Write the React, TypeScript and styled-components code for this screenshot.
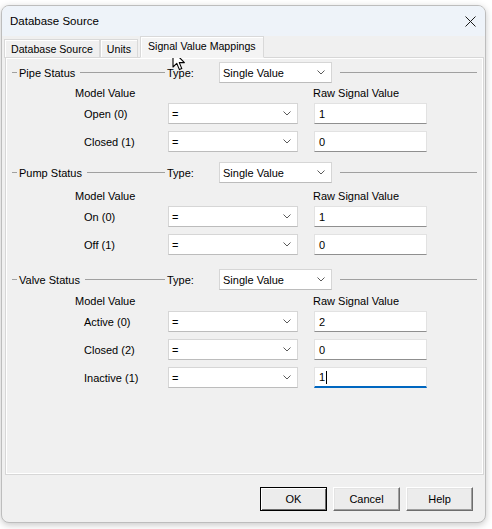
import React from "react";
import styled, { createGlobalStyle } from "styled-components";

const GlobalStyle = createGlobalStyle`
  html, body {
    margin: 0;
    padding: 0;
    background: #ffffff;
  }
  body {
    font-family: "Liberation Sans", Arial, sans-serif;
    font-size: 11px;
    color: #000000;
  }
`;

const Desktop = styled.div`
  position: relative;
  width: 492px;
  height: 529px;
  padding: 5px 0 0 1px;
  box-sizing: border-box;
  overflow: hidden;
`;

const Window = styled.div`
  width: 485px;
  height: 518px;
  box-sizing: border-box;
  border: 1px solid #bdbdbd;
  border-radius: 8px;
  background: #f0f0f0;
  box-shadow: 0 2px 7px rgba(0, 0, 0, 0.22);
  display: flex;
  flex-direction: column;
  overflow: hidden;
`;

const TitleBar = styled.div`
  height: 30px;
  flex: none;
  display: flex;
  align-items: center;
  justify-content: space-between;
  padding: 0 9px 0 8px;
  background: #eef3f9;
`;

const Title = styled.span`
  font-size: 11.5px;
  color: #000;
`;

const CloseIcon = styled.svg`
  width: 11px;
  height: 11px;
  display: block;
`;

const TabStrip = styled.div`
  height: 22px;
  flex: none;
  display: flex;
  align-items: flex-end;
  padding-left: 2px;
  margin-bottom: -1px;
`;

const Tab = styled.div<{ $active?: boolean }>`
  position: relative;
  z-index: ${(p) => (p.$active ? 1 : 0)};
  height: ${(p) => (p.$active ? "22px" : "19px")};
  margin-left: ${(p) => (p.$active ? "2px" : "0")};
  padding: 0 ${(p) => (p.$active ? "7px" : "6px")};
  padding-bottom: ${(p) => (p.$active ? "3px" : "0")};
  box-sizing: border-box;
  display: flex;
  align-items: center;
  font-size: 10.6px;
  background: ${(p) => (p.$active ? "#f4f4f4" : "#f0f0f0")};
  border: 1px solid #d9d9d9;
  border-bottom-color: ${(p) => (p.$active ? "#f4f4f4" : "#d9d9d9")};
  box-shadow: inset 1px 1px 0 #ffffff;
`;

const Panel = styled.div`
  flex: 1;
  margin: 0 1px 0 3px;
  padding: 4px 6px 0 6px;
  border: 1px solid #d7d7d7;
  box-shadow: inset 0 0 0 1px #ffffff;
  background: #f0f0f0;
  display: flex;
  flex-direction: column;
`;

const Section = styled.div<{ $top: number }>`
  margin-top: ${(p) => p.$top}px;
  display: flex;
  flex-direction: column;
`;

const HeaderRow = styled.div`
  height: 21px;
  display: flex;
  align-items: center;
`;

const Rule = styled.div<{ $w?: number }>`
  height: 1px;
  background: #a0a0a0;
  ${(p) => (p.$w ? `width: ${p.$w}px; flex: none;` : "flex: 1;")}
`;

const Legend = styled.span`
  margin: 0 5px 0 2px;
  white-space: nowrap;
`;

const TypeLabel = styled.span`
  width: 52px;
  margin-left: 2px;
  flex: none;
`;

const Combo = styled.div<{ $w: number }>`
  width: ${(p) => p.$w}px;
  height: 21px;
  flex: none;
  box-sizing: border-box;
  display: flex;
  align-items: center;
  justify-content: space-between;
  padding: 0 6px 0 3px;
  background: #ffffff;
  border: 1px solid #d6d6d6;
  border-bottom-color: #bcbcbc;
  margin-right: 8px;
`;

const Chevron = styled.svg`
  width: 8px;
  height: 5px;
  display: block;
`;

const Grid = styled.div<{ $headH: number }>`
  margin-left: 63px;
  display: grid;
  grid-template-columns: 93px 146px 113px;
  grid-template-rows: ${(p) => p.$headH}px;
  grid-auto-rows: 28px;
  align-items: start;
`;

const ColHead = styled.div<{ $shift?: number }>`
  align-self: end;
  padding-bottom: 3px;
  line-height: 13px;
  margin-left: ${(p) => p.$shift ?? 0}px;
  white-space: nowrap;
`;

const RowLabel = styled.div`
  height: 21px;
  display: flex;
  align-items: center;
  padding-left: 9px;
  white-space: nowrap;
`;

const Input = styled.div<{ $focused?: boolean }>`
  box-sizing: border-box;
  height: 21px;
  display: flex;
  align-items: center;
  padding-left: 4px;
  background: #ffffff;
  border: 1px solid #e2e2e2;
  border-bottom: ${(p) => (p.$focused ? "2px solid #0067c0" : "1px solid #8f8f8f")};
`;

const Caret = styled.span`
  display: inline-block;
  width: 1px;
  height: 13px;
  background: #000;
  margin-left: 1px;
`;

const Footer = styled.div`
  height: 47px;
  flex: none;
  display: flex;
  justify-content: flex-end;
  align-items: flex-start;
  gap: 6px;
  padding: 12px 12px 0 0;
  box-sizing: border-box;
`;

const Button = styled.button<{ $default?: boolean }>`
  width: 67px;
  height: 24px;
  padding: 0;
  font-family: "Liberation Sans", Arial, sans-serif;
  font-size: 11px;
  color: #000;
  background: #ececec;
  border: 1px solid;
  border-color: ${(p) =>
    p.$default ? "#000000" : "#ffffff #6d6d6d #6d6d6d #ffffff"};
  box-shadow: ${(p) =>
    p.$default
      ? "inset 1px 1px 0 #ffffff, inset -1px -1px 0 #6d6d6d"
      : "inset -1px -1px 0 #a0a0a0, inset 1px 1px 0 #e3e3e3"};
`;

const Cursor = styled.svg`
  position: absolute;
  left: 172px;
  top: 50px;
  width: 14px;
  height: 21px;
`;

type Row = { label: string; value: string; focused?: boolean };
type Group = { name: string; top: number; headH: number; rows: Row[] };

const groups: Group[] = [
  {
    name: "Pipe Status",
    top: 0,
    headH: 20,
    rows: [
      { label: "Open (0)", value: "1" },
      { label: "Closed (1)", value: "0" },
    ],
  },
  {
    name: "Pump Status",
    top: 3,
    headH: 23,
    rows: [
      { label: "On (0)", value: "1" },
      { label: "Off (1)", value: "0" },
    ],
  },
  {
    name: "Valve Status",
    top: 7,
    headH: 21,
    rows: [
      { label: "Active (0)", value: "2" },
      { label: "Closed (2)", value: "0" },
      { label: "Inactive (1)", value: "1", focused: true },
    ],
  },
];

const Down = () => (
  <Chevron viewBox="0 0 8 5">
    <path d="M0.5 0.5 L4 4 L7.5 0.5" fill="none" stroke="#5a5a5a" strokeWidth="1" />
  </Chevron>
);

const MappingGroup = ({ group }: { group: Group }) => (
  <Section $top={group.top}>
    <HeaderRow>
      <Rule $w={5} />
      <Legend>{group.name}</Legend>
      <Rule />
      <TypeLabel>Type:</TypeLabel>
      <Combo $w={113}>
        <span>Single Value</span>
        <Down />
      </Combo>
      <Rule $w={137} />
    </HeaderRow>
    <Grid $headH={group.headH}>
      <ColHead>Model Value</ColHead>
      <div />
      <ColHead $shift={-1}>Raw Signal Value</ColHead>
      {group.rows.map((r) => (
        <React.Fragment key={r.label}>
          <RowLabel>{r.label}</RowLabel>
          <Combo $w={130}>
            <span>=</span>
            <Down />
          </Combo>
          <Input $focused={r.focused}>
            {r.value}
            {r.focused && <Caret />}
          </Input>
        </React.Fragment>
      ))}
    </Grid>
  </Section>
);

export default function App() {
  return (
    <Desktop>
      <GlobalStyle />
      <Window>
        <TitleBar>
          <Title>Database Source</Title>
          <CloseIcon viewBox="0 0 11 11">
            <path d="M0.5 0.5 L10.5 10.5 M10.5 0.5 L0.5 10.5" stroke="#1a1a1a" strokeWidth="1" />
          </CloseIcon>
        </TitleBar>
        <TabStrip>
          <Tab>Database Source</Tab>
          <Tab>Units</Tab>
          <Tab $active>Signal Value Mappings</Tab>
        </TabStrip>
        <Panel>
          {groups.map((g) => (
            <MappingGroup key={g.name} group={g} />
          ))}
        </Panel>
        <Footer>
          <Button $default>OK</Button>
          <Button>Cancel</Button>
          <Button>Help</Button>
        </Footer>
      </Window>
      <Cursor viewBox="0 0 14 21">
        <path
          d="M1 1 L1 17 L4.8 13.4 L7.4 19.6 L9.8 18.6 L7.3 12.6 L12.4 12.6 Z"
          fill="#ffffff"
          stroke="#000000"
          strokeWidth="1.1"
          strokeLinejoin="round"
        />
      </Cursor>
    </Desktop>
  );
}
